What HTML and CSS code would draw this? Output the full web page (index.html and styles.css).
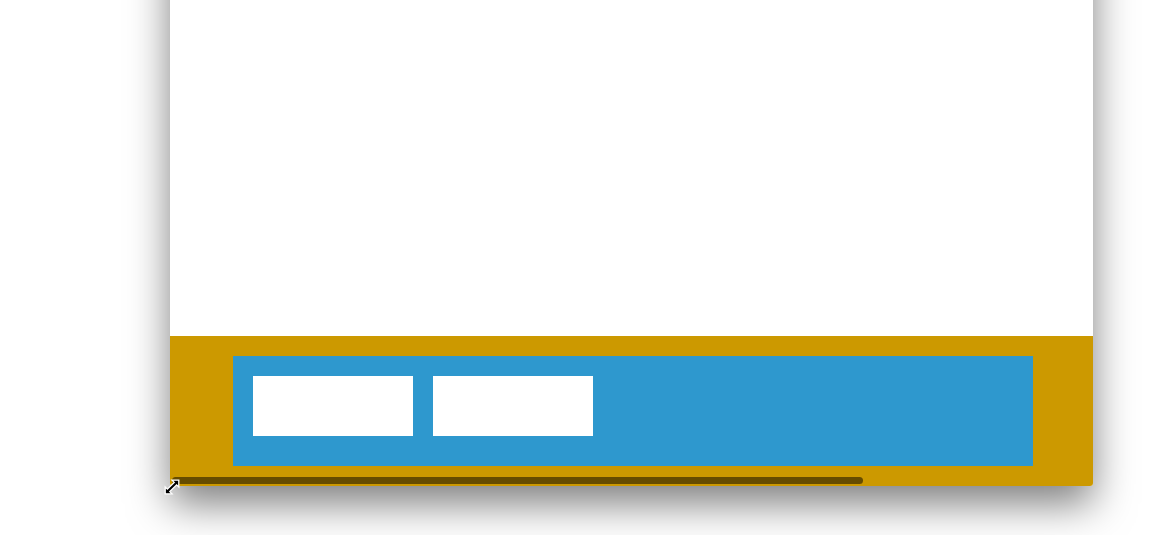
FILE: index.html
```html
<!DOCTYPE html>
<html>
<head>
<meta charset="utf-8">
<link rel="stylesheet" href="styles.css">
</head>
<body>
<div class="window">
  <div class="content"></div>
  <div class="footer">
    <div class="bar">
      <div class="box"></div>
      <div class="box"></div>
    </div>
  </div>
  <div class="scroll-thumb"></div>
  <svg class="resize-cursor" width="16" height="16" viewBox="0 0 16 16">
    <path d="M8 1.2 L14.8 1.2 L14.8 8 L12.6 5.8 L5.8 12.6 L8 14.8 L1.2 14.8 L1.2 8 L3.4 10.2 L10.2 3.4 Z" fill="#000" stroke="#fff" stroke-width="1.3" stroke-linejoin="miter"/>
  </svg>
</div>
</body>
</html>
```
FILE: styles.css
```css
html, body {
  margin: 0;
  padding: 0;
  background: #ffffff;
  overflow: hidden;
  width: 1157px;
  height: 535px;
}
.window {
  position: relative;
  margin: -100px 0 0 170px;
  width: 923px;
  height: 586px;
  display: flex;
  flex-direction: column;
  background: #ffffff;
  border-radius: 0 0 3px 3px;
  box-shadow: 0 18px 40px rgba(0, 0, 0, 0.5);
}
.content {
  flex: 1;
  background: #ffffff;
}
.footer {
  background: #cc9900;
  padding: 20px 60px 20px 63px;
  border-radius: 0 0 3px 3px;
}
.bar {
  height: 110px;
  box-sizing: border-box;
  background: #2e98ce;
  padding: 20px;
  display: flex;
  gap: 20px;
}
.box {
  width: 160px;
  height: 60px;
  background: #ffffff;
}
.scroll-thumb {
  position: absolute;
  left: 2px;
  bottom: 2px;
  width: 691px;
  height: 7px;
  border-radius: 4px;
  background: #664c00;
}
.resize-cursor {
  position: absolute;
  left: -6px;
  bottom: -9px;
}
```
